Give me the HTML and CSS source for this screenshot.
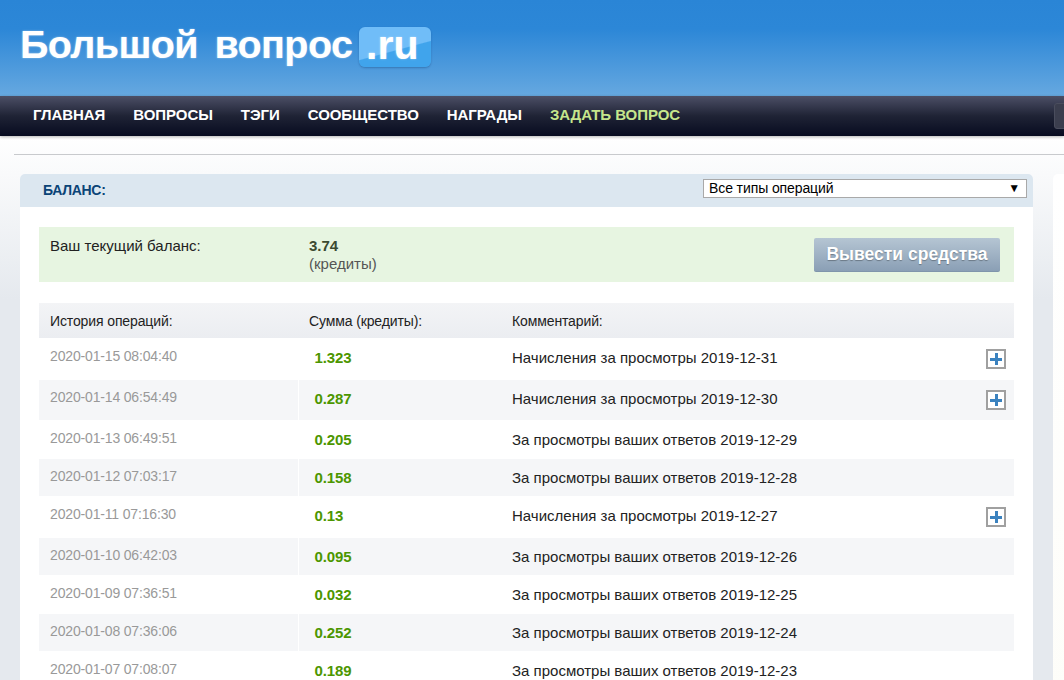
FILE: index.html
```html
<!DOCTYPE html>
<html lang="ru">
<head>
    <meta charset="UTF-8">
    <title>Большой вопрос .ru</title>
    <link rel="stylesheet" href="styles.css">
</head>
<body>
    <div class="header">
        <a class="logo">Большой вопрос<span class="logo-ru">.ru</span></a>
    </div>

    <div class="nav">
        <a>Главная</a>
        <a>Вопросы</a>
        <a>Тэги</a>
        <a>Сообщество</a>
        <a>Награды</a>
        <a class="ask">Задать вопрос</a>
        <div class="search"></div>
    </div>

    <div class="page">
        <div class="rule"></div>
        <div class="columns">
            <div class="panel">
                <div class="panel-head">
                    <span class="panel-title">Баланс:</span>
                    <div class="type-select">
                        <span>Все типы операций</span>
                        <span class="arrow">▼</span>
                    </div>
                </div>

                <div class="panel-body">
                    <div class="balance">
                        <div class="balance-label">Ваш текущий баланс:</div>
                        <div class="balance-value">
                            <b>3.74</b>
                            <span>(кредиты)</span>
                        </div>
                        <button class="withdraw">Вывести средства</button>
                    </div>

                    <table class="history">
                        <tr class="head">
                            <th class="c-date">История операций:</th>
                            <th class="c-sum">Сумма (кредиты):</th>
                            <th class="c-note">Комментарий:</th>
                            <th class="c-more"></th>
                        </tr>
                        <tr class="h42">
                            <td class="date">2020-01-15 08:04:40</td>
                            <td class="sum">1.323</td>
                            <td class="note">Начисления за просмотры 2019-12-31</td>
                            <td class="more"><span class="plus"></span></td>
                        </tr>
                        <tr class="alt h40">
                            <td class="date">2020-01-14 06:54:49</td>
                            <td class="sum">0.287</td>
                            <td class="note">Начисления за просмотры 2019-12-30</td>
                            <td class="more"><span class="plus"></span></td>
                        </tr>
                        <tr class="h39">
                            <td class="date">2020-01-13 06:49:51</td>
                            <td class="sum">0.205</td>
                            <td class="note">За просмотры ваших ответов 2019-12-29</td>
                            <td></td>
                        </tr>
                        <tr class="alt h37">
                            <td class="date">2020-01-12 07:03:17</td>
                            <td class="sum">0.158</td>
                            <td class="note">За просмотры ваших ответов 2019-12-28</td>
                            <td></td>
                        </tr>
                        <tr class="h42">
                            <td class="date">2020-01-11 07:16:30</td>
                            <td class="sum">0.13</td>
                            <td class="note">Начисления за просмотры 2019-12-27</td>
                            <td class="more"><span class="plus"></span></td>
                        </tr>
                        <tr class="alt h37">
                            <td class="date">2020-01-10 06:42:03</td>
                            <td class="sum">0.095</td>
                            <td class="note">За просмотры ваших ответов 2019-12-26</td>
                            <td></td>
                        </tr>
                        <tr class="h39">
                            <td class="date">2020-01-09 07:36:51</td>
                            <td class="sum">0.032</td>
                            <td class="note">За просмотры ваших ответов 2019-12-25</td>
                            <td></td>
                        </tr>
                        <tr class="alt h37">
                            <td class="date">2020-01-08 07:36:06</td>
                            <td class="sum">0.252</td>
                            <td class="note">За просмотры ваших ответов 2019-12-24</td>
                            <td></td>
                        </tr>
                        <tr class="h39">
                            <td class="date">2020-01-07 07:08:07</td>
                            <td class="sum">0.189</td>
                            <td class="note">За просмотры ваших ответов 2019-12-23</td>
                            <td></td>
                        </tr>
                    </table>
                </div>
            </div>
            <div class="sidebar"></div>
        </div>
    </div>
</body>
</html>
```

FILE: styles.css
```css
html, body {
    height: 100%;
    margin: 0;
    overflow: hidden;
}

body {
    font-family: "Liberation Sans", Arial, sans-serif;
    font-size: 15px;
    color: #222;
    background: #e5e9ee;
}

.header {
    height: 96px;
    box-sizing: border-box;
    padding: 21px 0 0 20px;
    background: linear-gradient(to bottom, #2a85d6 0%, #2c87d7 30%, #66a8e0 100%);
}

.logo {
    display: flex;
    align-items: flex-start;
    color: #fff;
    font-size: 39.5px;
    font-weight: bold;
    line-height: 46px;
    letter-spacing: -0.6px;
    word-spacing: 6px;
    text-shadow: 0 0 2px rgba(255, 255, 255, 0.5);
}

.logo-ru {
    width: 72px;
    height: 40px;
    box-sizing: border-box;
    padding-right: 6px;
    margin: 6px 0 0 7px;
    border-radius: 6px;
    text-align: center;
    line-height: 36px;
    letter-spacing: 0;
    font-size: 41px;
    background: linear-gradient(165deg, #70bdf8 0%, #70bdf8 55%, #40a4ec 57%, #40a4ec 100%);
    box-shadow: 0 1px 2px rgba(0, 40, 90, 0.3);
}

.nav {
    height: 40px;
    box-sizing: border-box;
    display: flex;
    align-items: center;
    padding: 0 0 3px 33px;
    gap: 28px;
    background: linear-gradient(to bottom, #4c4f66 0%, #1f2335 50%, #070b20 100%);
    box-shadow: 0 1px 3px rgba(0, 0, 0, 0.3);
    position: relative;
}

.nav a {
    color: #fff;
    font-size: 15px;
    font-weight: bold;
    letter-spacing: -0.06px;
    text-transform: uppercase;
}

.nav a.ask {
    color: #c6e68c;
}

.search {
    position: absolute;
    left: 1054px;
    top: 7px;
    width: 60px;
    height: 24px;
    border-radius: 3px;
    background: #3b3e4e;
    border: 1px solid #4a4d5d;
}

.page {
    height: 544px;
    padding-top: 18px;
    box-sizing: border-box;
    background: linear-gradient(to bottom, #fff 0%, #e5e9ee 30%);
}

.rule {
    height: 1px;
    margin-left: 14px;
    background: #c8cacd;
}

.columns {
    display: flex;
    gap: 20px;
    margin: 19px 0 0 20px;
    width: 1100px;
}

.panel {
    width: 1013px;
    flex-shrink: 0;
    background: #fff;
    border-radius: 5px 5px 0 0;
}

.panel-head {
    height: 33px;
    display: flex;
    align-items: flex-start;
    justify-content: space-between;
    padding: 5px 6px 0 23px;
    box-sizing: border-box;
    background: #dce7f0;
    border-radius: 5px 5px 0 0;
}

.panel-title {
    margin-top: 3px;
    color: #0b4477;
    font-size: 14px;
    font-weight: bold;
    letter-spacing: -0.3px;
    text-transform: uppercase;
}

.type-select {
    width: 324px;
    height: 19px;
    box-sizing: border-box;
    display: flex;
    justify-content: space-between;
    padding: 0 6px 0 5px;
    border: 1px solid #a9a9a9;
    background: #fff;
    color: #000;
    font-size: 14px;
    letter-spacing: -0.1px;
    line-height: 17px;
}

.arrow {
    font-size: 12px;
}

.panel-body {
    padding: 20px 19px 0;
}

.balance {
    height: 55px;
    display: flex;
    align-items: flex-start;
    background: #e7f5e1;
    margin-bottom: 21px;
    position: relative;
}

.balance-label {
    width: 259px;
    padding: 10px 0 0 11px;
    box-sizing: border-box;
    flex-shrink: 0;
    color: #222;
}

.balance-value {
    padding-top: 10px;
    margin-left: 11px;
    line-height: 18px;
    color: #555;
}

.balance-value b {
    display: block;
    color: #3c4a30;
}

.withdraw {
    margin: 11px 14px 0 auto;
    width: 186px;
    height: 34px;
    border: 0;
    border-bottom: 1px solid #7f95ab;
    border-radius: 2px;
    background: linear-gradient(to bottom, #b5c5d3, #8a9fb5);
    color: #fff;
    font-family: inherit;
    font-size: 17.5px;
    font-weight: bold;
    text-shadow: 0 1px 1px rgba(0, 0, 0, 0.3);
}

.history {
    width: 975px;
    table-layout: fixed;
    border-collapse: collapse;
}

.history th {
    height: 35px;
    box-sizing: border-box;
    padding: 0 0 0 11px;
    text-align: left;
    font-size: 14px;
    font-weight: normal;
    letter-spacing: -0.12px;
    color: #222;
    background: linear-gradient(to bottom, #f3f4f6, #ebedf1);
}

.c-date { width: 259px; }
.c-sum { width: 203px; }
.c-more { width: 40px; }

.history td {
    padding: 0;
    vertical-align: top;
}

.h42 { height: 42px; }
.h40 { height: 40px; }
.h39 { height: 39px; }
.h37 { height: 37px; }

.alt {
    background: #f5f6f8;
}

.history td.date {
    padding: 10px 0 0 11px;
    font-size: 14px;
    letter-spacing: -0.16px;
    color: #999;
    border-right: 1px solid #fff;
}

.history td.sum {
    padding: 11px 0 0 16px;
    color: #4c9600;
    font-weight: bold;
    letter-spacing: -0.1px;
}

.history td.note {
    padding: 11px 0 0 11px;
    color: #222;
}

.history td.more {
    padding: 11px 0 0 12px;
}

.history .alt td.date {
    padding-top: 9px;
}

.history .alt td.sum,
.history .alt td.note,
.history .alt td.more {
    padding-top: 10px;
}

.plus {
    display: block;
    width: 20px;
    height: 20px;
    box-sizing: border-box;
    border: 2px solid #a0a0a0;
    background:
        linear-gradient(#3b82bf, #3b82bf) center / 12px 3px no-repeat,
        linear-gradient(#3b82bf, #3b82bf) center / 3px 12px no-repeat,
        #fff;
}

.sidebar {
    width: 40px;
    height: 600px;
    background: linear-gradient(to bottom, #fff, #fdfdf8);
    border-radius: 5px 0 0 0;
}
```
